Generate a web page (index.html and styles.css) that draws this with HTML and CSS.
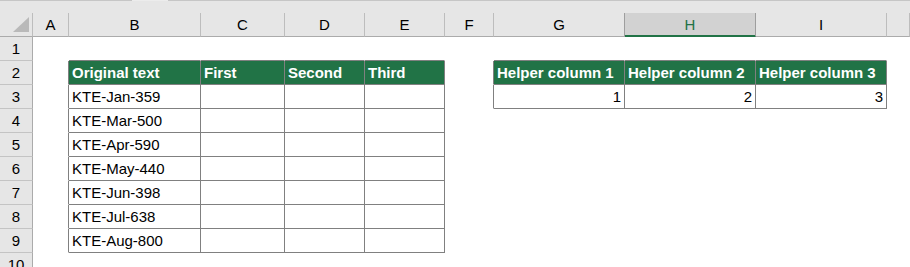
FILE: index.html
```html
<!DOCTYPE html>
<html lang="en">
<head>
  <meta charset="UTF-8">
  <title>Split text - helper columns</title>
  <link rel="stylesheet" href="styles.css">
</head>
<body>

  <div class="sheet">
    <div class="topline"><span class="rule"></span><span class="rule gap"></span><span class="rule fill"></span></div>
    <div class="band"></div>

    <div class="grid">
      <!-- column letters -->
      <div class="hd corner"><span class="tri"></span></div>
      <div class="hd">A</div>
      <div class="hd">B</div>
      <div class="hd">C</div>
      <div class="hd">D</div>
      <div class="hd">E</div>
      <div class="hd">F</div>
      <div class="hd pre">G</div>
      <div class="hd sel">H</div>
      <div class="hd">I</div>
      <div class="hd"></div>

      <!-- row 1 -->
      <div class="rh">1</div>
      <div></div>
      <div class="top"></div>
      <div class="top"></div>
      <div class="top"></div>
      <div class="top"></div>
      <div></div>
      <div class="top"></div>
      <div class="top"></div>
      <div class="top"></div>
      <div></div>

      <!-- row 2 -->
      <div class="rh">2</div>
      <div class="lead"></div>
      <div class="td th">Original text</div>
      <div class="td th">First</div>
      <div class="td th">Second</div>
      <div class="td th">Third</div>
      <div class="lead"></div>
      <div class="td th">Helper column 1</div>
      <div class="td th">Helper column 2</div>
      <div class="td th">Helper column 3</div>
      <div></div>

      <!-- row 3 -->
      <div class="rh">3</div>
      <div class="lead"></div>
      <div class="td">KTE-Jan-359</div>
      <div class="td"></div>
      <div class="td"></div>
      <div class="td"></div>
      <div class="lead"></div>
      <div class="td num">1</div>
      <div class="td num">2</div>
      <div class="td num">3</div>
      <div></div>

      <!-- row 4 -->
      <div class="rh">4</div>
      <div class="lead"></div>
      <div class="td">KTE-Mar-500</div>
      <div class="td"></div>
      <div class="td"></div>
      <div class="td"></div>
      <div></div>
      <div></div>
      <div></div>
      <div></div>
      <div></div>

      <!-- row 5 -->
      <div class="rh">5</div>
      <div class="lead"></div>
      <div class="td">KTE-Apr-590</div>
      <div class="td"></div>
      <div class="td"></div>
      <div class="td"></div>
      <div></div>
      <div></div>
      <div></div>
      <div></div>
      <div></div>

      <!-- row 6 -->
      <div class="rh">6</div>
      <div class="lead"></div>
      <div class="td">KTE-May-440</div>
      <div class="td"></div>
      <div class="td"></div>
      <div class="td"></div>
      <div></div>
      <div></div>
      <div></div>
      <div></div>
      <div></div>

      <!-- row 7 -->
      <div class="rh">7</div>
      <div class="lead"></div>
      <div class="td">KTE-Jun-398</div>
      <div class="td"></div>
      <div class="td"></div>
      <div class="td"></div>
      <div></div>
      <div></div>
      <div></div>
      <div></div>
      <div></div>

      <!-- row 8 -->
      <div class="rh">8</div>
      <div class="lead"></div>
      <div class="td">KTE-Jul-638</div>
      <div class="td"></div>
      <div class="td"></div>
      <div class="td"></div>
      <div></div>
      <div></div>
      <div></div>
      <div></div>
      <div></div>

      <!-- row 9 -->
      <div class="rh">9</div>
      <div class="lead"></div>
      <div class="td">KTE-Aug-800</div>
      <div class="td"></div>
      <div class="td"></div>
      <div class="td"></div>
      <div></div>
      <div></div>
      <div></div>
      <div></div>
      <div></div>

      <!-- row 10 -->
      <div class="rh">10</div>
    </div>
  </div>

</body>
</html>
```

FILE: styles.css
```css
body {
  margin: 0;
  font-family: "Liberation Sans", Arial, sans-serif;
  font-size: 15px;
  color: #000;
  background: #fff;
  overflow: hidden;
}

.sheet {
  height: 267px;
  overflow: hidden;
}

/* thin rule under the formula bar */
.topline {
  display: flex;
  height: 1px;
}

.rule {
  width: 132px;
  background: #c6c6c6;
}

.rule.gap {
  width: 36px;
  background: #ececec;
}

.rule.fill {
  flex: 1;
}

.band {
  height: 12px;
  background: #e6e6e6;
}

.grid {
  display: grid;
  grid-template-columns: 33px 36px 132px 84px 80px 80px 49px 131px 131px 131px 1fr;
  grid-auto-rows: 24px;
}

.grid > * {
  box-sizing: border-box;
  border-right: 1px solid transparent;
  border-bottom: 1px solid transparent;
  line-height: 23px;
  white-space: nowrap;
  overflow: hidden;
}

/* column letters */
.hd {
  background: #e6e6e6;
  border-right-color: #bdbdbd;
  border-bottom-color: #ababab;
  text-align: center;
}

.hd.pre {
  border-right-color: #9e9e9e;
}

.hd.sel {
  background: #d2d2d2;
  color: #217346;
  border-right-color: #9e9e9e;
  border-bottom-color: #217346;
  box-shadow: inset 0 -1px #217346;
}

.corner {
  display: flex;
  justify-content: flex-end;
  align-items: flex-end;
  padding: 0 3px 4px 0;
}

.tri {
  width: 16px;
  height: 15px;
  background: #b9b9b9;
  clip-path: polygon(100% 0, 100% 100%, 0 100%);
}

/* row numbers */
.rh {
  background: #e6e6e6;
  border-right-color: #ababab;
  border-bottom-color: #c4c4c4;
  text-align: center;
}

/* table edges owned by neighbouring cells */
.top {
  border-bottom-color: #808080;
}

.lead {
  border-right-color: #808080;
}

.td {
  border-right-color: #808080;
  border-bottom-color: #808080;
  padding: 0 3px;
}

.th {
  background: #217346;
  color: #fff;
  font-weight: bold;
}

.num {
  text-align: right;
}
```
